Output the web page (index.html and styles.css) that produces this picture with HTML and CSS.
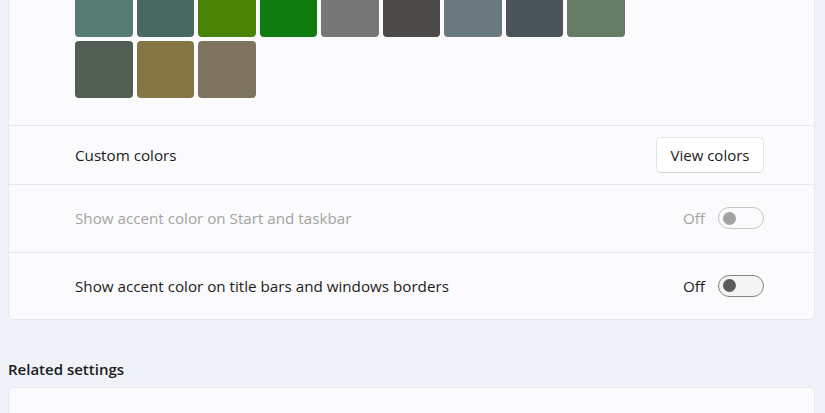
FILE: index.html
```html
<!DOCTYPE html>
<html>
<head>
<meta charset="utf-8">
<link rel="stylesheet" href="styles.css">
</head>
<body>
<div class="page">
  <section class="card">
    <div class="swatches">
      <div class="sw" style="background:#567c73"></div>
      <div class="sw" style="background:#486860"></div>
      <div class="sw" style="background:#498205"></div>
      <div class="sw" style="background:#107c10"></div>
      <div class="sw" style="background:#767676"></div>
      <div class="sw" style="background:#4c4a48"></div>
      <div class="sw" style="background:#69797e"></div>
      <div class="sw" style="background:#4a5459"></div>
      <div class="sw" style="background:#647c64"></div>
      <div class="sw" style="background:#525e54"></div>
      <div class="sw" style="background:#847545"></div>
      <div class="sw" style="background:#7e735f"></div>
    </div>
    <div class="row row-custom">
      <span class="label">Custom colors</span>
      <button class="btn">View colors</button>
    </div>
    <div class="row row-toggle disabled">
      <span class="label">Show accent color on Start and taskbar</span>
      <div class="ctl"><span class="state">Off</span><span class="toggle"><span class="knob"></span></span></div>
    </div>
    <div class="row row-toggle">
      <span class="label">Show accent color on title bars and windows borders</span>
      <div class="ctl"><span class="state">Off</span><span class="toggle"><span class="knob"></span></span></div>
    </div>
  </section>
  <h2 class="heading">Related settings</h2>
  <section class="card card2"></section>
</div>
</body>
</html>
```
FILE: styles.css
```css
html, body {
  margin: 0;
  padding: 0;
  background: #eff2f8;
  overflow: hidden;
  height: 413px;
}
body {
  font-family: "Open Sans", "Noto Sans", sans-serif;
  color: #1b1b1b;
}
.page {
  padding: 0 10px 0 8px;
}
.card {
  background: #fbfbfd;
  border: 1px solid #e6e8ec;
  border-top: none;
  border-radius: 0 0 5px 5px;
}
.swatches {
  display: grid;
  grid-template-columns: repeat(9, 57.5px);
  grid-auto-rows: 57px;
  column-gap: 4px;
  row-gap: 4.5px;
  margin-top: -20.5px;
  padding: 0 0 27px 66px;
}
.sw {
  border-radius: 4px;
}
.row {
  display: flex;
  align-items: center;
  justify-content: space-between;
  border-top: 1px solid #e8e9ed;
  padding: 0 50px 0 66px;
  font-size: 15.2px;
}
.row-custom {
  height: 58px;
}
.row-toggle {
  height: 66.5px;
}
.btn {
  font-family: inherit;
  font-size: 15px;
  color: #1b1b1b;
  background: #ffffff;
  border: 1px solid #e3e4e7;
  border-bottom-color: #d4d5d8;
  border-radius: 5px;
  width: 108px;
  height: 36px;
  padding: 0;
}
.ctl {
  display: flex;
  align-items: center;
  gap: 13px;
}
.toggle {
  width: 40px;
  height: 20px;
  border: 1px solid #858585;
  border-radius: 11px;
  background: #f4f4f5;
  display: flex;
  align-items: center;
  padding-left: 4px;
  box-sizing: content-box;
}
.knob {
  width: 13px;
  height: 13px;
  border-radius: 50%;
  background: #5a5a5a;
}
.disabled .label, .disabled .state {
  color: #a3a3a3;
}
.disabled .toggle {
  border-color: #c6c6c6;
  background: #fbfbfd;
}
.disabled .knob {
  background: #a3a3a3;
}
.heading {
  margin: 0;
  padding: 39px 0 8px 0;
  font-size: 15px;
  font-weight: 600;
  color: #1b1b1b;
}
.card2 {
  border-top: 1px solid #e6e8ec;
  border-radius: 5px;
  height: 40px;
}
```
